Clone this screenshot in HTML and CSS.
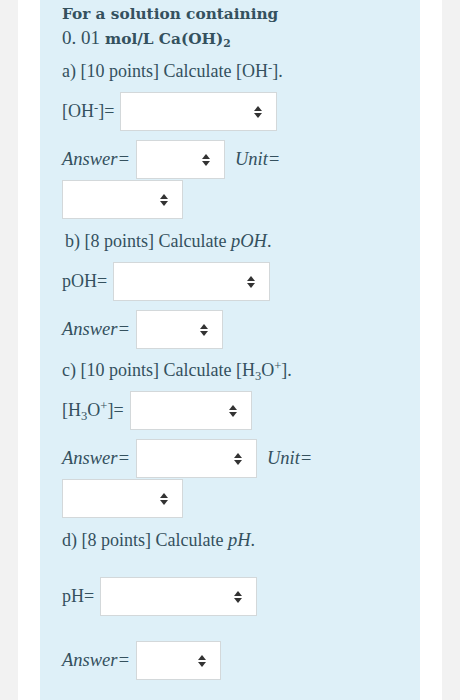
FILE: index.html
```html
<!DOCTYPE html>
<html>
<head>
<meta charset="utf-8">
<link rel="stylesheet" href="styles.css">
</head>
<body>
<div class="sheet">
  <div class="panel">
    <div class="title">
      <div class="tl"><b>For a solution containing</b></div>
      <div class="tl"><span class="num">0. 01</span> <b>mol/L Ca(OH)<sub>2</sub></b></div>
    </div>

    <p class="q">a) [10 points] Calculate [OH<sup>-</sup>].</p>
    <div class="row r-9"><span class="lbl">[OH<sup>-</sup>]=</span><span class="sel w157"></span></div>
    <div class="row r-9"><span class="lbl m">Answer=</span><span class="sel w89"></span><span class="lbl m unit">Unit=</span></div>
    <div class="row r-1"><span class="sel w121"></span></div>

    <p class="q qb">b) [8 points] Calculate <span class="m">pOH</span>.</p>
    <div class="row r-9"><span class="lbl">pOH=</span><span class="sel w157"></span></div>
    <div class="row r-9"><span class="lbl m">Answer=</span><span class="sel w87"></span></div>

    <p class="q">c) [10 points] Calculate [H<sub>3</sub>O<sup>+</sup>].</p>
    <div class="row r-9"><span class="lbl">[H<sub>3</sub>O<sup>+</sup>]=</span><span class="sel w122"></span></div>
    <div class="row r-9"><span class="lbl m">Answer=</span><span class="sel w121"></span><span class="lbl m unit">Unit=</span></div>
    <div class="row r-1"><span class="sel w121"></span></div>

    <p class="q qd">d) [8 points] Calculate <span class="m">pH</span>.</p>
    <div class="row r-25"><span class="lbl">pH=</span><span class="sel w157"></span></div>
    <div class="row r-25"><span class="lbl m">Answer=</span><span class="sel w85"></span></div>
  </div>
</div>
</body>
</html>
```

FILE: styles.css
```css
html, body {
  margin: 0;
  padding: 0;
}
body {
  background: #f2f2f2;
  font-family: "Liberation Serif", serif;
  font-size: 18px;
  color: #34515e;
}
.sheet {
  margin: 0 18px;
  padding: 0 22px;
  background: #ffffff;
  min-height: 700px;
}
.panel {
  background: #def0f8;
  padding: 0 0 20px 22px;
  min-height: 680px;
  overflow: hidden;
}
.title {
  margin: 0;
  padding-top: 2px;
}
.tl {
  height: 24px;
  line-height: 24px;
  white-space: nowrap;
  display: flex;
  align-items: baseline;
  gap: 5px;
}
.title b {
  font-family: "DejaVu Serif", serif;
  font-size: 15.3px;
  font-weight: bold;
}
.num {
  font-weight: normal;
  font-size: 19px;
}
.q {
  margin: 9px 0 0 0;
  height: 24px;
  line-height: 24px;
  white-space: nowrap;
}
.qb {
  margin-top: 10px;
  padding-left: 3px;
}
.qd {
  margin-top: 10px;
}
sub, sup {
  font-size: 70%;
  line-height: 0;
  position: relative;
}
sub { vertical-align: -0.3em; }
sup { vertical-align: 0.5em; }
.m {
  font-style: italic;
  font-size: 18.5px;
}
.row {
  display: flex;
  align-items: center;
  height: 39px;
}
.r-9 { margin-top: 9px; }
.r-1 { margin-top: 1px; }
.r-25 { margin-top: 25px; }
.lbl {
  margin-right: 6px;
  white-space: nowrap;
}
.lbl.m {
  margin-right: 6px;
}
.unit {
  margin-left: 10px;
}
.sel {
  box-sizing: border-box;
  height: 39px;
  background: #ffffff;
  border: 1px solid #d3d8da;
  position: relative;
  display: block;
}
.sel::before,
.sel::after {
  content: "";
  position: absolute;
  right: 14px;
  width: 0;
  height: 0;
  border-left: 4px solid transparent;
  border-right: 4px solid transparent;
}
.sel::before {
  top: 13px;
  border-bottom: 5px solid #333333;
}
.sel::after {
  top: 20px;
  border-top: 5px solid #333333;
}
.w157 { width: 157px; }
.w121 { width: 121px; }
.w122 { width: 122px; }
.w89 { width: 89px; }
.w87 { width: 87px; }
.w85 { width: 85px; }
```
